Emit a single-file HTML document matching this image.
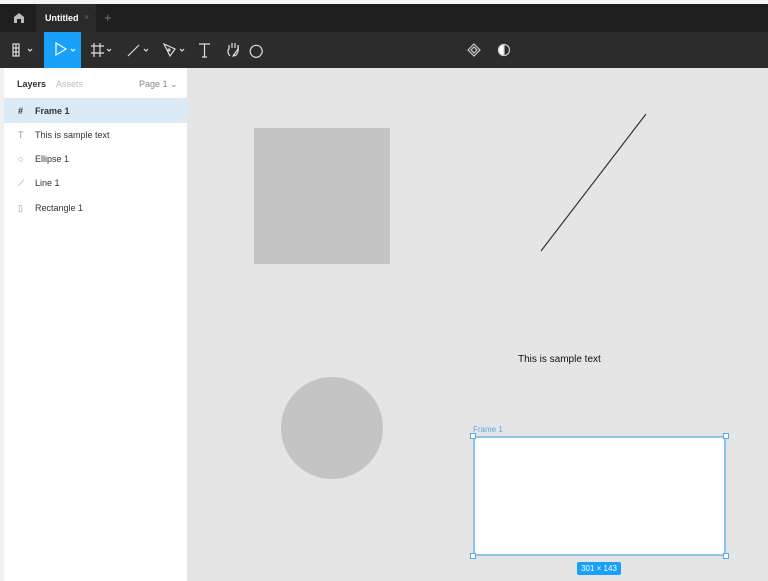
<!DOCTYPE html>
<html><head><style>
*{margin:0;padding:0;box-sizing:border-box}
body{width:768px;height:581px;overflow:hidden;background:#e5e5e5;font-family:"Liberation Sans",sans-serif;position:relative}
.a{position:absolute}
.row{position:absolute;left:4px;width:183px;height:24px;font-size:9px;color:#333;line-height:24px;padding-left:31px}
.ic{position:absolute;left:14px;top:0;color:#999;font-size:9px}
</style></head><body>
<div class="a" style="left:0;top:0;width:768px;height:4px;background:#f4f4f4"></div>
<div class="a" style="left:0;top:4px;width:768px;height:28px;background:#1e1e1e"></div>
<div class="a" style="left:36px;top:4px;width:60px;height:28px;background:#2a2a2a"></div>
<svg class="a" style="left:13px;top:12px" width="12" height="12"><path d="M1 11V5L6 1L11 5V11H8V7H4V11Z" fill="#bbb"/></svg>
<div class="a" style="left:45px;top:13px;color:#fff;font-size:9px;font-weight:bold">Untitled</div>
<div class="a" style="left:84px;top:12px;color:#666;font-size:9px">×</div>
<div class="a" style="left:104px;top:10px;color:#777;font-size:13px">+</div>
<div class="a" style="left:0;top:32px;width:768px;height:36px;background:#2c2c2c"></div>
<div class="a" style="left:44px;top:32px;width:37px;height:36px;background:#18a0fb"></div>
<svg class="a" style="left:0;top:32px" width="300" height="36" fill="none" stroke="#ddd" stroke-width="1.2">
<rect x="13" y="12" width="6" height="12"/><path d="M13 16H19M13 20H19M16 12V24"/><path d="M28 17l2 2 2-2"/>
<path d="M56 11L66 17L56 23Z" stroke="#fff"/><path d="M71 17l2 2 2-2" stroke="#fff"/>
<path d="M94 11V25M100 11V25M91 14H104M91 21H104"/><path d="M107 17l2 2 2-2"/>
<path d="M128 24L139 13"/><path d="M144 17l2 2 2-2"/>
<path d="M164 12L175 17L170 24L164 12Z"/><circle cx="169" cy="18" r="1"/><path d="M180 17l2 2 2-2"/>
<path d="M199 12H210M204.5 12V25M202 25H207"/>
<path d="M230 24C227 21 228 17 229 17V13M232 16V11M235 16V11M238 17V13C239 20 237 24 233 24Z"/>
<path d="M260 24L262 21A6 6 0 1 0 260 24Z"/>
</svg>
<svg class="a" style="left:466px;top:42px" width="50" height="16" fill="none" stroke="#ccc" stroke-width="1.2">
<path d="M8 2L14 8L8 14L2 8Z"/><path d="M5 8L8 5L11 8L8 11Z"/>
<circle cx="38" cy="8" r="5.5"/><path d="M38 2.5A5.5 5.5 0 0 0 38 13.5Z" fill="#fff"/>
</svg>
<div class="a" style="left:0;top:68px;width:4px;height:513px;background:#f0f0f0"></div>
<div class="a" style="left:4px;top:68px;width:183px;height:513px;background:#fff"></div>
<div class="a" style="left:17px;top:79px;font-size:9px;color:#333;font-weight:bold">Layers</div>
<div class="a" style="left:56px;top:79px;font-size:9px;color:#bbb">Assets</div>
<div class="a" style="left:139px;top:79px;font-size:9px;color:#888">Page 1 ⌄</div>
<div class="a" style="left:4px;top:98px;width:183px;height:1px;background:#e8e8e8"></div>
<div class="row" style="top:99px;background:#daebf7;font-weight:bold"><span class="ic" style="color:#333">#</span>Frame 1</div>
<div class="row" style="top:123px"><span class="ic">T</span>This is sample text</div>
<div class="row" style="top:147px"><span class="ic">○</span>Ellipse 1</div>
<div class="row" style="top:171px"><span class="ic">⟋</span>Line 1</div>
<div class="row" style="top:196px"><span class="ic">▯</span>Rectangle 1</div>
<div class="a" style="left:254px;top:128px;width:136px;height:136px;background:#c4c4c4"></div>
<div class="a" style="left:281px;top:377px;width:102px;height:102px;border-radius:50%;background:#c4c4c4"></div>
<svg class="a" style="left:0;top:0" width="768" height="581"><path d="M646 114L541 251" stroke="#333" stroke-width="1.2"/></svg>
<div class="a" style="left:518px;top:353px;font-size:10px;color:#111;line-height:13px">This is sample text</div>
<div class="a" style="left:473px;top:425px;font-size:8px;color:#5aa9e6">Frame 1</div>
<div class="a" style="left:473px;top:436px;width:253px;height:120px;background:#fff;border:2px solid #8cc6ee"></div>
<div class="a" style="left:470px;top:433px;width:6px;height:6px;background:#fff;border:1px solid #5aa9e6"></div>
<div class="a" style="left:723px;top:433px;width:6px;height:6px;background:#fff;border:1px solid #5aa9e6"></div>
<div class="a" style="left:470px;top:553px;width:6px;height:6px;background:#fff;border:1px solid #5aa9e6"></div>
<div class="a" style="left:723px;top:553px;width:6px;height:6px;background:#fff;border:1px solid #5aa9e6"></div>
<div class="a" style="left:577px;top:562px;width:44px;height:13px;background:#18a0fb;border-radius:2px;color:#fff;font-size:8px;text-align:center;line-height:13px">301 × 143</div>
</body></html>
